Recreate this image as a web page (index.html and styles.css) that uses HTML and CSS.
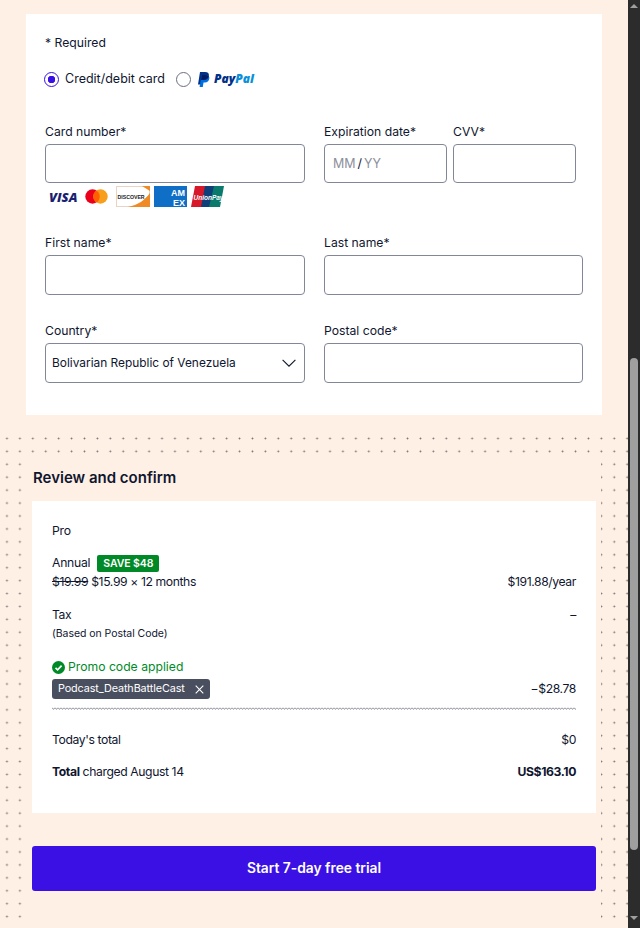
FILE: index.html
```html
<!DOCTYPE html>
<html lang="en">
<head>
  <meta charset="UTF-8">
  <meta name="viewport" content="width=device-width, initial-scale=1.0">
  <title>Checkout</title>
  <link rel="stylesheet" href="styles.css">
</head>
<body>
  <div class="page">
    <div class="content">
      <form class="payment-card">
        <p class="required">* Required</p>

        <div class="pay-methods">
          <span class="radio radio-on"></span>
          <span class="pay-label">Credit/debit card</span>
          <span class="radio"></span>
          <svg class="paypal-icon" width="13" height="15" viewBox="0 0 13 15">
            <path d="M3 0h5c3 0 4.300 1.500 3.800 3.900C11.300 6.600 9.500 8 7 8H5.200L4.400 12.500H1z" fill="#003087"/>
            <path d="M4.500 3h4.600c2.300.3 3.600 1.500 3.200 3.700C11.900 9 10.200 10.400 8 10.400H6.500L5.800 15H2.600z" fill="#0070e0"/>
            <path d="M4.500 3h4.600c1.200.2 2.200.5 2.700 1.300C11.300 6.700 9.500 8 7 8H5.200L4 8z" fill="#001c64"/>
          </svg>
          <span class="paypal-word"><b>Pay</b><i>Pal</i></span>
        </div>

        <div class="field-row">
          <div class="field">
            <label for="card-number">Card number*</label>
            <input class="box" id="card-number" type="text">
            <div class="card-logos">
              <svg class="logo-visa" width="31" height="16" viewBox="0 0 31 16">
                <text x="0" y="13" class="visa-text">VISA</text>
              </svg>
              <svg class="logo-mc" width="23" height="15" viewBox="0 0 23 15">
                <circle cx="7.500" cy="7.500" r="7.200" fill="#eb001b"/>
                <circle cx="15.500" cy="7.500" r="7.200" fill="#f79e1b"/>
                <path d="M11.500 1.500a7.200 7.200 0 0 1 0 12a7.200 7.200 0 0 1 0-12z" fill="#ff5f00"/>
              </svg>
              <svg class="logo-discover" width="34" height="21" viewBox="0 0 34 21">
                <rect x=".5" y=".5" width="33" height="20" fill="#fff" stroke="#e8d3c4"/>
                <path d="M34 7V21H12C22 19 29 14 34 7zM26 0h8v5z" fill="#f08a24"/>
                <text x="1.500" y="12.500" class="discover-text">DISCOVER</text>
              </svg>
              <svg class="logo-amex" width="33" height="21" viewBox="0 0 33 21">
                <rect width="33" height="21" fill="#0f6fc6"/>
                <text x="17" y="9.500" class="amex-text">AM</text>
                <text x="19" y="19.500" class="amex-text">EX</text>
              </svg>
              <svg class="logo-union" width="33" height="21" viewBox="0 0 33 21">
                <path d="M4 0h12l-4 21H0z" fill="#d7182a"/>
                <path d="M14 0h11l-4 21H10z" fill="#0f3f78"/>
                <path d="M23 0h10l-4 21H18z" fill="#0a7a6c"/>
                <text x="2.500" y="13.500" class="union-text">UnionPay</text>
              </svg>
            </div>
          </div>
          <div class="expiry-cvv">
            <div class="field">
              <label for="expiry">Expiration date*</label>
              <div class="box expiry-box" id="expiry"><span>MM</span><em>/</em><span>YY</span></div>
            </div>
            <div class="field">
              <label for="cvv">CVV*</label>
              <input class="box" id="cvv" type="text">
            </div>
          </div>
        </div>

        <div class="field-row row-tight">
          <div class="field">
            <label for="first-name">First name*</label>
            <input class="box box-tall" id="first-name" type="text">
          </div>
          <div class="field">
            <label for="last-name">Last name*</label>
            <input class="box box-tall" id="last-name" type="text">
          </div>
        </div>

        <div class="field-row row-tight">
          <div class="field">
            <label for="country">Country*</label>
            <div class="box box-tall select-box" id="country">
              <span>Bolivarian Republic of Venezuela</span>
              <svg width="14" height="8" viewBox="0 0 14 8"><path d="M.6.8 7 7.200 13.400.8" fill="none" stroke="#10162f" stroke-width="1.100"/></svg>
            </div>
          </div>
          <div class="field">
            <label for="postal">Postal code*</label>
            <input class="box box-tall" id="postal" type="text">
          </div>
        </div>
      </form>

      <section class="review">
        <div class="review-inner">
          <h2>Review and confirm</h2>
          <div class="summary">
            <p class="plan">Pro</p>

            <div class="annual"><span>Annual</span><span class="save-badge">SAVE $48</span></div>
            <div class="line">
              <span><s>$19.99</s> $15.99 × 12 months</span>
              <span>$191.88/year</span>
            </div>

            <div class="line tax-line"><span>Tax</span><span>–</span></div>
            <p class="note">(Based on Postal Code)</p>

            <div class="promo">
              <svg width="13" height="13" viewBox="0 0 13 13">
                <circle cx="6.500" cy="6.500" r="6.500" fill="#008a27"/>
                <path d="M3.500 6.800 5.600 8.800 9.600 4.600" fill="none" stroke="#fff" stroke-width="1.700"/>
              </svg>
              <span>Promo code applied</span>
            </div>
            <div class="line chip-line">
              <span class="chip">Podcast_DeathBattleCast
                <svg width="9" height="9" viewBox="0 0 9 9"><path d="M.7.7 8.300 8.300M8.300.7 .7 8.300" stroke="#fff" stroke-width="1.100"/></svg>
              </span>
              <span>−$28.78</span>
            </div>

            <svg class="wavy" width="524" height="3">
              <defs>
                <pattern id="wave" width="3" height="3" patternUnits="userSpaceOnUse">
                  <path d="M0 .6 1.500 2.400 3 .6" fill="none" stroke="#7d808e" stroke-width=".9"/>
                </pattern>
              </defs>
              <rect width="524" height="3" fill="url(#wave)"/>
            </svg>

            <div class="line today"><span>Today's total</span><span>$0</span></div>
            <div class="line total"><span><b>Total</b> charged August 14</span><b>US$163.10</b></div>
          </div>
          <button class="submit" type="button">Start 7-day free trial</button>
        </div>
      </section>
    </div>

    <div class="scrollbar">
      <span class="arrow-up"></span>
      <div class="thumb"></div>
      <span class="arrow-down"></span>
    </div>
  </div>
</body>
</html>
```

FILE: styles.css
```css
* {
  box-sizing: border-box;
}
html, body {
  margin: 0;
  padding: 0;
  height: 928px;
  overflow: hidden;
}
body {
  font-family: "Inter", "Liberation Sans", sans-serif;
  font-size: 12.200px;
  line-height: 18px;
  color: #10162f;
  background-color: #fff0e5;
}
p {
  margin: 0;
}
.page {
  display: flex;
  height: 928px;
}
.content {
  flex: 1;
  padding-top: 14px;
  background-color: #fff0e5;
}

/* payment form */
.payment-card {
  width: 576px;
  height: 401px;
  margin-left: 26px;
  padding: 20px 19px 0;
  background-color: #fff;
}
.pay-methods {
  display: flex;
  align-items: center;
  height: 18px;
  margin-top: 18px;
  margin-left: -1px;
}
.radio {
  width: 15px;
  height: 15px;
  border: 1px solid #6b6f80;
  border-radius: 50%;
  background-color: #fff;
}
.radio-on {
  border-color: #3a10e5;
  background: radial-gradient(circle, #3a10e5 3.500px, #fff 4px);
}
.pay-label {
  width: 117px;
  padding-left: 6px;
  font-size: 12.500px;
}
.paypal-icon {
  margin-left: 6px;
}
.paypal-word {
  margin-left: 4px;
  font-family: "Open Sans", sans-serif;
  font-size: 12px;
  font-weight: 800;
  font-style: italic;
}
.paypal-word b {
  color: #003087;
  font-weight: 800;
}
.paypal-word i {
  color: #0a8fd8;
}
.field-row {
  display: grid;
  grid-template-columns: 260px 259px;
  column-gap: 19px;
  margin-top: 34px;
}
.row-tight {
  margin-top: 26px;
}
.expiry-cvv {
  display: grid;
  grid-template-columns: 123px 123px;
  column-gap: 6px;
}
.field label {
  display: block;
  height: 18px;
  margin-bottom: 4px;
  padding-top: 1px;
}
.box {
  display: block;
  width: 100%;
  height: 39px;
  border: 1px solid #828798;
  border-radius: 4px;
  background-color: #fff;
}
.box-tall {
  height: 40px;
}
.expiry-box {
  display: flex;
  align-items: center;
  padding-left: 8px;
  color: #8c8f9c;
  font-size: 12.500px;
}
.expiry-box em {
  margin: 0 2px;
  color: #10162f;
  font-style: normal;
}
.select-box {
  display: flex;
  align-items: center;
  justify-content: space-between;
  padding: 0 8px 0 6px;
  font-size: 11.900px;
}
.card-logos {
  display: flex;
  align-items: center;
  height: 21px;
  margin-top: 3px;
  padding-left: 3px;
}
.logo-visa {
  margin-left: 1px;
}
.logo-mc {
  margin-left: 5px;
}
.logo-discover {
  margin-left: 8px;
}
.logo-amex {
  margin-left: 4px;
}
.logo-union {
  margin-left: 4px;
}
.visa-text {
  font-family: "Open Sans", sans-serif;
  font-size: 13px;
  font-weight: 800;
  font-style: italic;
  fill: #1a1f71;
}
.discover-text {
  font-family: "Liberation Sans", sans-serif;
  font-size: 5.200px;
  font-weight: 700;
  fill: #222;
}
.amex-text {
  font-family: "Liberation Sans", sans-serif;
  font-size: 9px;
  font-weight: 700;
  fill: #fff;
}
.union-text {
  font-family: "Liberation Sans", sans-serif;
  font-size: 6.500px;
  font-weight: 700;
  font-style: italic;
  fill: #fff;
}

/* review section, dotted backdrop around a plain inner column */
.review {
  height: 495px;
  margin-top: 18px;
  padding: 25px 27px 0 26px;
  background-image: radial-gradient(circle at center, #77716e 0.7px, transparent 1.200px);
  background-size: 12.930px 12.930px;
  background-position: 0.500px -1px;
}
.review-inner {
  height: 470px;
  padding: 8px 5px 0 6px;
  background-color: #fff0e5;
}
.review h2 {
  margin: 0 0 11px 1px;
  font-size: 15px;
  line-height: 24px;
  font-weight: 600;
}
.summary {
  height: 312px;
  padding: 21px 20px 0;
  background-color: #fff;
  letter-spacing: -0.250px;
}
.annual {
  display: flex;
  align-items: center;
  height: 18px;
  margin-top: 14px;
}
.save-badge {
  height: 17px;
  margin-left: 7px;
  padding: 0 6px;
  border-radius: 2px;
  background-color: #008a27;
  color: #fff;
  font-size: 10.500px;
  line-height: 17px;
  font-weight: 600;
  letter-spacing: -0.100px;
}
.line {
  display: flex;
  align-items: center;
  justify-content: space-between;
  height: 18px;
  letter-spacing: -0.400px;
}
.annual + .line {
  margin-top: 1px;
}
.tax-line {
  margin-top: 15px;
}
.note {
  margin-top: 1px;
  font-size: 10.500px;
  letter-spacing: -0.050px;
}
.promo {
  display: flex;
  align-items: center;
  gap: 3px;
  height: 18px;
  margin-top: 15px;
  color: #008a27;
  letter-spacing: 0;
}
.chip-line {
  height: 20px;
  margin-top: 3px;
}
.chip {
  display: flex;
  align-items: center;
  gap: 10px;
  height: 20px;
  padding: 0 6px;
  border-radius: 3px;
  background-color: #4a4f60;
  color: #fff;
  font-size: 10.800px;
  letter-spacing: -0.100px;
}
.wavy {
  display: block;
  margin-top: 8px;
}
.today {
  margin-top: 21px;
}
.total {
  margin-top: 14px;
}
.submit {
  display: block;
  width: 100%;
  height: 45px;
  margin-top: 33px;
  padding-bottom: 2px;
  border: none;
  border-radius: 3px;
  background-color: #3a10e5;
  color: #fff;
  font-family: inherit;
  font-size: 13.800px;
  font-weight: 600;
}

/* browser scrollbar */
.scrollbar {
  display: flex;
  flex-direction: column;
  align-items: center;
  width: 12px;
  background-color: #2c2c2c;
}
.arrow-up, .arrow-down {
  width: 0;
  height: 0;
  border-left: 4px solid transparent;
  border-right: 4px solid transparent;
}
.arrow-up {
  margin-top: 4px;
  border-bottom: 4px solid #9f9f9f;
}
.arrow-down {
  margin-top: 66px;
  border-top: 4px solid #9f9f9f;
}
.thumb {
  width: 8px;
  height: 492px;
  margin-top: 350px;
  border-radius: 4px;
  background-color: #9f9f9f;
}
```
